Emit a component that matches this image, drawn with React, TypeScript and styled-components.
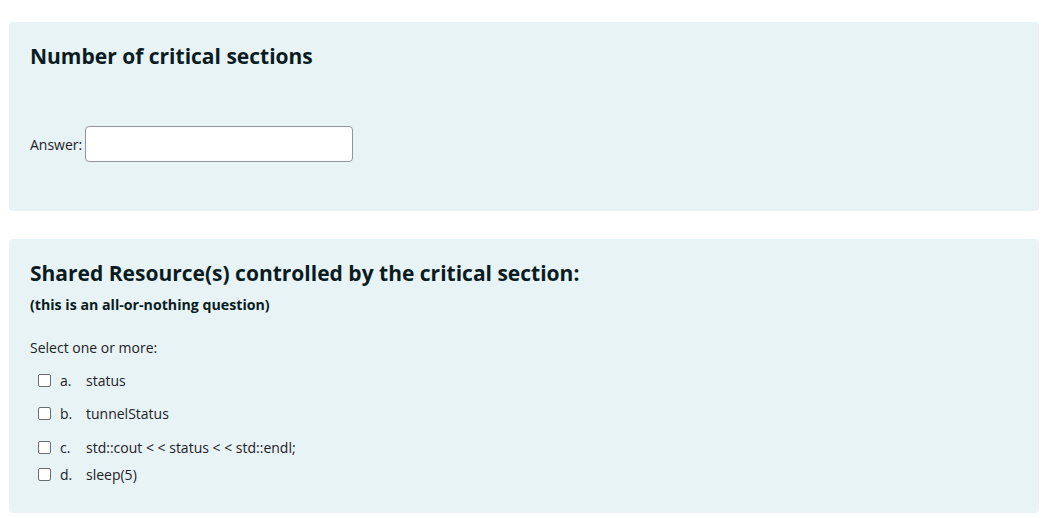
import React from 'react';
import styled, { createGlobalStyle } from 'styled-components';

const GlobalStyle = createGlobalStyle`
	body {
		margin: 0;
		background: #fff;
		font-family: "Open Sans", "Noto Sans", sans-serif;
		color: #1d2125;
	}
`;

const Page = styled.main`
	display: flex;
	flex-direction: column;
	gap: 28px;
	padding: 22px 13px 0 9px;
`;

const Panel = styled.section<{ $minHeight: number }>`
	background: #e7f3f5;
	border-radius: 4px;
	padding: 18px 21px 16px;
	min-height: ${({ $minHeight }) => $minHeight}px;
	box-sizing: border-box;
`;

const Title = styled.h3`
	margin: 0;
	font-size: 21px;
	font-weight: 700;
	color: #0a1c22;
	line-height: 32px;
`;

const Note = styled.h4`
	margin: 6px 0 0;
	font-size: 14.2px;
	font-weight: 700;
	color: #0a1c22;
`;

const AnswerRow = styled.label`
	display: flex;
	align-items: center;
	gap: 3px;
	margin-top: 54px;
	font-size: 14px;
`;

const TextInput = styled.input`
	width: 268px;
	height: 36px;
	box-sizing: border-box;
	border: 1px solid #8f959e;
	border-radius: 4px;
	background: #fff;
	padding: 6px 12px;
	font: inherit;
`;

const Prompt = styled.div`
	margin-top: 24px;
	font-size: 14px;
`;

const Options = styled.div`
	display: flex;
	flex-direction: column;
	margin-top: 7px;
	padding-left: 8px;
`;

const Option = styled.label<{ $height: number }>`
	display: flex;
	align-items: center;
	height: ${({ $height }) => $height}px;
	font-size: 14px;
`;

const Box = styled.span`
	width: 11px;
	height: 11px;
	border: 1px solid #6a6e73;
	border-radius: 2px;
	background: #fff;
	margin-right: 9px;
`;

const Letter = styled.span`
	width: 26px;
`;

const options = [
	{ letter: 'a.', text: 'status', height: 32 },
	{ letter: 'b.', text: 'tunnelStatus', height: 34 },
	{ letter: 'c.', text: 'std::cout < < status < < std::endl;', height: 34 },
	{ letter: 'd.', text: 'sleep(5)', height: 20 },
];

const App = () => (
	<>
		<GlobalStyle />
		<Page>
			<Panel $minHeight={189}>
				<Title>Number of critical sections</Title>
				<AnswerRow>
					Answer:
					<TextInput type="text" />
				</AnswerRow>
			</Panel>
			<Panel $minHeight={274}>
				<Title>Shared Resource(s) controlled by the critical section:</Title>
				<Note>(this is an all-or-nothing question)</Note>
				<Prompt>Select one or more:</Prompt>
				<Options>
					{options.map((o) => (
						<Option key={o.letter} $height={o.height}>
							<Box />
							<Letter>{o.letter}</Letter>
							{o.text}
						</Option>
					))}
				</Options>
			</Panel>
		</Page>
	</>
);

export default App;
